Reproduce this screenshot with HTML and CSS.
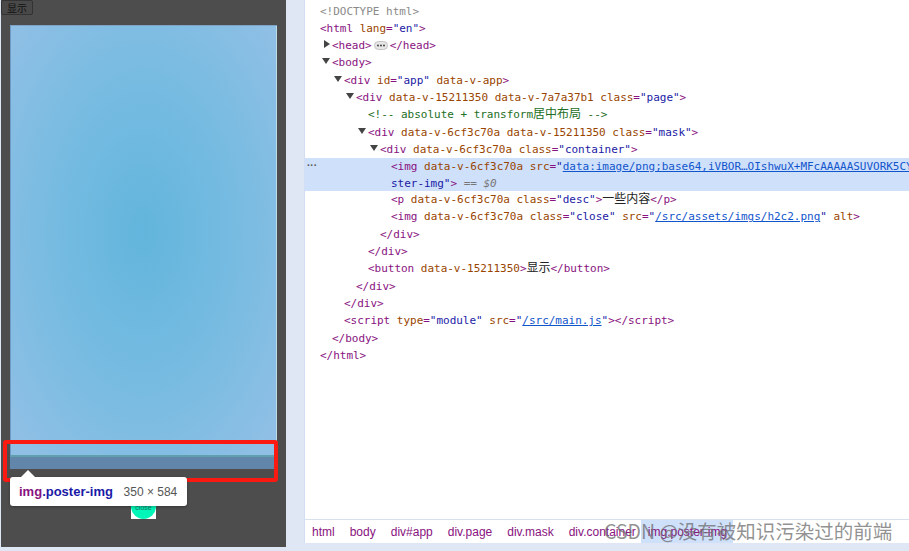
FILE: index.html
```html
<!DOCTYPE html>
<html lang="en">
<head>
    <meta charset="UTF-8">
    <title>Elements panel</title>
    <link rel="stylesheet" href="styles.css">
</head>
<body>
    <div class="stage">
        <div class="preview">
            <button class="show-btn">显示</button>
            <div class="poster">
                <div class="poster-fill"></div>
                <div class="poster-edge"></div>
                <div class="poster-pad"></div>
            </div>
            <div class="close-img"><span class="close-dot">close</span></div>
            <div class="red-box"></div>
            <div class="tip">
                <span class="tip-arrow"></span>
                <span class="tip-tag">img</span><span class="tip-class">.poster-img</span>
                <span class="tip-size">350 × 584</span>
            </div>
        </div>

        <div class="devtools">
            <div class="tree">
                <div class="line lv0"><span class="doctype">&lt;!DOCTYPE html&gt;</span></div>
                <div class="line lv0"><span class="t">&lt;html</span> <span class="a">lang</span><span class="t">=</span><span class="v">"en"</span><span class="t">&gt;</span></div>
                <div class="line lv1"><span class="arrow closed"></span><span class="t">&lt;head&gt;</span><svg class="dots" width="14" height="9" viewBox="0 0 14 9"><rect x="0.5" y="0.5" width="13" height="8" rx="4" fill="#e6e6e6" stroke="#c4c4c4"/><circle cx="4" cy="4.5" r="0.9" fill="#333"/><circle cx="7" cy="4.5" r="0.9" fill="#333"/><circle cx="10" cy="4.5" r="0.9" fill="#333"/></svg><span class="t">&lt;/head&gt;</span></div>
                <div class="line lv1"><span class="arrow"></span><span class="t">&lt;body&gt;</span></div>
                <div class="line lv2"><span class="arrow"></span><span class="t">&lt;div</span> <span class="a">id</span><span class="t">=</span><span class="v">"app"</span> <span class="a">data-v-app</span><span class="t">&gt;</span></div>
                <div class="line lv3"><span class="arrow"></span><span class="t">&lt;div</span> <span class="a">data-v-15211350</span> <span class="a">data-v-7a7a37b1</span> <span class="a">class</span><span class="t">=</span><span class="v">"page"</span><span class="t">&gt;</span></div>
                <div class="line lv4"><span class="c">&lt;!-- absolute + transform<span class="cjk">居中布局</span> --&gt;</span></div>
                <div class="line lv4"><span class="arrow"></span><span class="t">&lt;div</span> <span class="a">data-v-6cf3c70a</span> <span class="a">data-v-15211350</span> <span class="a">class</span><span class="t">=</span><span class="v">"mask"</span><span class="t">&gt;</span></div>
                <div class="line lv5"><span class="arrow"></span><span class="t">&lt;div</span> <span class="a">data-v-6cf3c70a</span> <span class="a">class</span><span class="t">=</span><span class="v">"container"</span><span class="t">&gt;</span></div>
                <div class="selected">
                    <span class="sel-dots">···</span>
                    <div class="line lv6"><span class="t">&lt;img</span> <span class="a">data-v-6cf3c70a</span> <span class="a">src</span><span class="t">=</span><span class="v">"</span><span class="link">data:image/png;base64,iVBOR…OIshwuX+MFcAAAAASUVORK5CYII=</span><span class="v">"</span></div>
                    <div class="line lv6"><span class="v">ster-img"</span><span class="t">&gt;</span> <span class="eq">== <i>$0</i></span></div>
                </div>
                <div class="line lv6"><span class="t">&lt;p</span> <span class="a">data-v-6cf3c70a</span> <span class="a">class</span><span class="t">=</span><span class="v">"desc"</span><span class="t">&gt;</span><span class="cjk txt">一些内容</span><span class="t">&lt;/p&gt;</span></div>
                <div class="line lv6"><span class="t">&lt;img</span> <span class="a">data-v-6cf3c70a</span> <span class="a">class</span><span class="t">=</span><span class="v">"close"</span> <span class="a">src</span><span class="t">=</span><span class="v">"</span><span class="link">/src/assets/imgs/h2c2.png</span><span class="v">"</span> <span class="a">alt</span><span class="t">&gt;</span></div>
                <div class="line lv5"><span class="t">&lt;/div&gt;</span></div>
                <div class="line lv4"><span class="t">&lt;/div&gt;</span></div>
                <div class="line lv4"><span class="t">&lt;button</span> <span class="a">data-v-15211350</span><span class="t">&gt;</span><span class="cjk txt">显示</span><span class="t">&lt;/button&gt;</span></div>
                <div class="line lv3"><span class="t">&lt;/div&gt;</span></div>
                <div class="line lv2"><span class="t">&lt;/div&gt;</span></div>
                <div class="line lv2"><span class="t">&lt;script</span> <span class="a">type</span><span class="t">=</span><span class="v">"module"</span> <span class="a">src</span><span class="t">=</span><span class="v">"</span><span class="link">/src/main.js</span><span class="v">"</span><span class="t">&gt;&lt;/script&gt;</span></div>
                <div class="line lv1"><span class="t">&lt;/body&gt;</span></div>
                <div class="line lv0"><span class="t">&lt;/html&gt;</span></div>
            </div>
            <div class="crumbs">
                <span>html</span>
                <span>body</span>
                <span>div#app</span>
                <span>div.page</span>
                <span>div.mask</span>
                <span>div.container</span>
                <span class="crumb-on">img.poster-img</span>
            </div>
        </div>
        <div class="watermark">CSDN @没有被知识污染过的前端</div>
    </div>
</body>
</html>
```
FILE: styles.css
```css
html, body {
    margin: 0;
    height: 100%;
    overflow: hidden;
}

body {
    background: #dfe6f4;
    font-family: "Liberation Sans", "Noto Sans CJK SC", sans-serif;
}

.stage {
    position: relative;
    display: flex;
    width: 909px;
    height: 551px;
    overflow: hidden;
}

/* left side: page under the inspect overlay */
.preview {
    position: relative;
    width: 285px;
    height: 547px;
    margin-left: 1px;
    margin-right: 19px;
    flex-shrink: 0;
    background: #4d4d4d;
}

.show-btn {
    display: block;
    width: 32px;
    height: 15px;
    padding: 0;
    background: #494949;
    border: 1px solid #333;
    border-radius: 2px;
    color: #111;
    font-size: 10px;
    line-height: 13px;
    font-family: "Noto Sans CJK SC", sans-serif;
}

.poster {
    width: 267px;
    margin: 10px 0 0 9px;
}

.poster-fill {
    height: 430px;
    background: radial-gradient(ellipse 175px 290px at 50% 48%, #62b5dc 0%, #76bbe1 50%, #8fbfe5 100%);
    border-top: 1px solid #7ea3c6;
    box-sizing: border-box;
    box-shadow: inset 1px 0 0 #6d9bc6, inset -1px 0 0 #bcdde6;
}

.poster-edge {
    height: 2px;
    background: #5f9fae;
}

.poster-pad {
    height: 12px;
    background: #6286aa;
}

.close-img {
    width: 25px;
    height: 25px;
    margin: 25px 0 0 130px;
    background: #fff;
}

.close-dot {
    display: block;
    width: 25px;
    height: 25px;
    border-radius: 50%;
    background: #00f5b8;
    color: #1c7a66;
    font-size: 7px;
    line-height: 27px;
    text-align: center;
}

.red-box {
    position: absolute;
    left: 2px;
    top: 440px;
    width: 267px;
    height: 34px;
    border: 4px solid #fb1a12;
    border-radius: 3px;
}

.tip {
    position: absolute;
    left: 9px;
    top: 477px;
    width: 177px;
    height: 29px;
    box-sizing: border-box;
    padding-left: 9px;
    background: #fff;
    border-radius: 3px;
    box-shadow: 0 1px 3px rgba(0, 0, 0, 0.3);
    font-size: 13px;
    line-height: 29px;
    white-space: nowrap;
}

.tip-arrow {
    position: absolute;
    left: 11px;
    top: -7px;
    border-left: 7px solid transparent;
    border-right: 7px solid transparent;
    border-bottom: 7px solid #fff;
}

.tip-tag {
    color: #881280;
    font-weight: bold;
}

.tip-class {
    color: #1a1aa6;
    font-weight: bold;
}

.tip-size {
    margin-left: 7px;
    color: #555;
    font-size: 12px;
}

/* right side: elements panel */
.devtools {
    display: flex;
    flex-direction: column;
    width: 604px;
    height: 543px;
    background: #fff;
    box-shadow: -1px 0 0 #d3def5;
}

.tree {
    flex: 1;
    padding-top: 2.5px;
    overflow: hidden;
}

.line {
    position: relative;
    height: 17.3px;
    line-height: 17px;
    font-family: "DejaVu Sans Mono", monospace;
    font-size: 11px;
    letter-spacing: -0.02px;
    white-space: nowrap;
    color: #881280;
}

.lv0 { padding-left: 15px; }
.lv1 { padding-left: 27px; }
.lv2 { padding-left: 39px; }
.lv3 { padding-left: 51px; }
.lv4 { padding-left: 63px; }
.lv5 { padding-left: 75px; }
.lv6 { padding-left: 86px; }

.t { color: #881280; }
.a { color: #994500; }
.v { color: #1a1aa6; }
.c { color: #236e25; }
.doctype { color: #8a8a8a; }
.txt { color: #222; }

.cjk {
    font-family: "Noto Sans CJK SC", sans-serif;
    font-size: 12px;
    line-height: 1;
}

.link {
    color: #1155cc;
    text-decoration: underline;
}

.eq { color: #777; }

.arrow {
    position: absolute;
    margin-left: -10px;
    margin-top: 4px;
    border-left: 4px solid transparent;
    border-right: 4px solid transparent;
    border-top: 6px solid #444;
}

.arrow.closed {
    margin-left: -8px;
    margin-top: 3px;
    border-top: 4px solid transparent;
    border-bottom: 4px solid transparent;
    border-left: 6px solid #444;
    border-right: 0;
}

.dots {
    margin: 0 2px;
    vertical-align: -1px;
}

.selected {
    position: relative;
    height: 33px;
    background: #cfe0fb;
}

.selected .line {
    height: 16.5px;
}

.sel-dots {
    position: absolute;
    left: 2px;
    top: 1px;
    color: #555;
    font-size: 10px;
    line-height: 14px;
    font-weight: bold;
}

.crumbs {
    display: flex;
    gap: 15px;
    height: 23px;
    padding-left: 7px;
    border-top: 1px solid #d8e0ee;
    font-size: 12px;
    line-height: 24px;
    color: #881280;
    white-space: nowrap;
}

.crumb-on {
    margin-left: -10px;
    padding: 0 6px 0 7px;
    background: #cfe0fb;
    color: #881280;
}

.watermark {
    position: absolute;
    left: 604px;
    top: 517px;
    color: rgba(110, 110, 110, 0.75);
    font-family: "Noto Sans CJK SC", sans-serif;
    font-size: 19.5px;
    line-height: 28px;
    white-space: nowrap;
}
```
